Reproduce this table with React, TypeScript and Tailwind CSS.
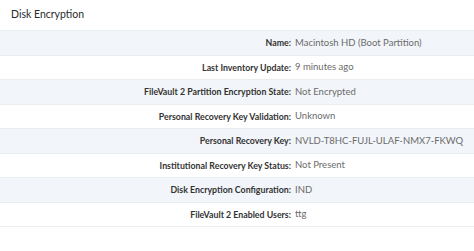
import React from "react";

const rows: [string, string][] = [
  ["Name:", "Macintosh HD (Boot Partition)"],
  ["Last Inventory Update:", "9 minutes ago"],
  ["FileVault 2 Partition Encryption State:", "Not Encrypted"],
  ["Personal Recovery Key Validation:", "Unknown"],
  ["Personal Recovery Key:", "NVLD-T8HC-FUJL-ULAF-NMX7-FKWQ"],
  ["Institutional Recovery Key Status:", "Not Present"],
  ["Disk Encryption Configuration:", "IND"],
  ["FileVault 2 Enabled Users:", "ttg"],
];

export default function App() {
  return (
    <div
      className="w-[474px] h-[251px] bg-white overflow-hidden"
      style={{ fontFamily: "Lato, 'Noto Sans', sans-serif" }}
    >
      <div className="h-[31px] pl-[11px] flex items-center text-[10.5px] text-[#2a2a2a] border-b border-[#eceff2]">
        Disk Encryption
      </div>
      <div className="flex flex-col">
        {rows.map(([k, v], i) => (
          <div
            key={k}
            className={
              "h-[24.5px] flex items-center border-b border-[#eaedf0] " +
              (i % 2 === 0 ? "bg-[#f2f5f9]" : "bg-white")
            }
          >
            <div className="w-[291px] text-right text-[8.8px] font-bold text-[#333] whitespace-nowrap">
              {k}
            </div>
            <div className="pl-[4px] text-[9.5px] text-[#6b6b6b] whitespace-nowrap">
              {v}
            </div>
          </div>
        ))}
      </div>
    </div>
  );
}
